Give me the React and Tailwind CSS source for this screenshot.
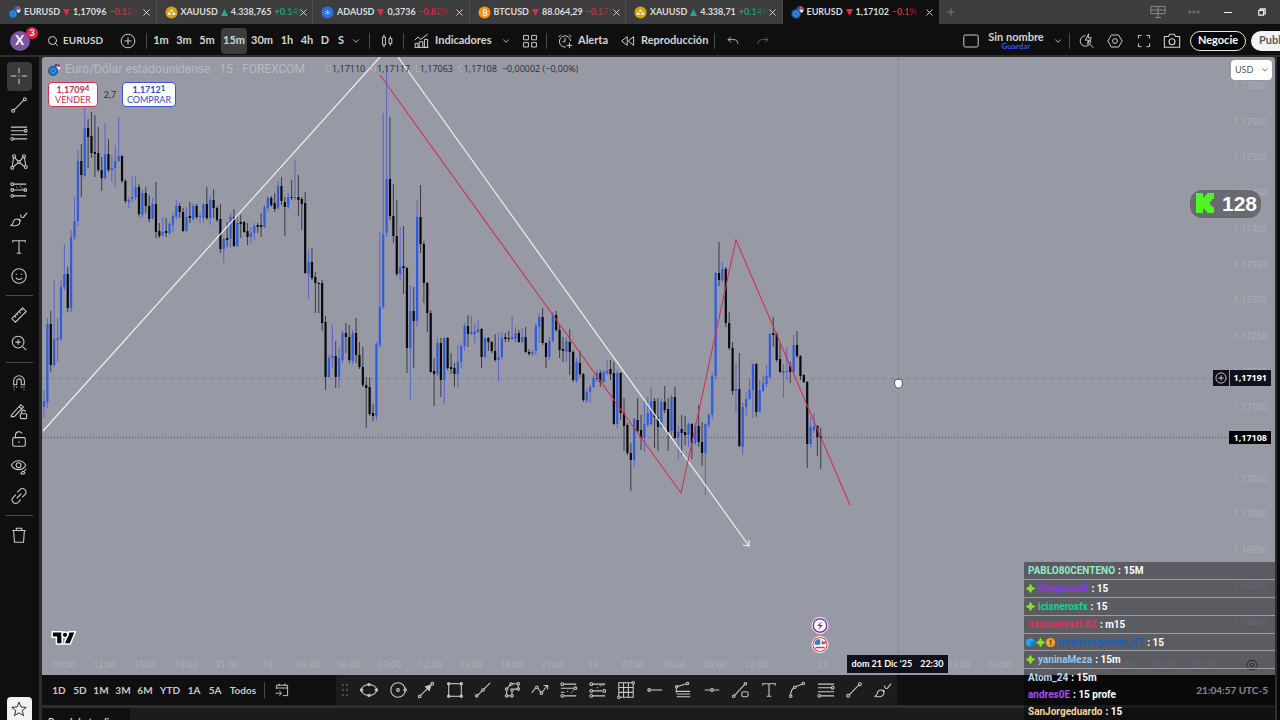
import React from "react";
import clsx from "clsx";
import { ChevronDown, Plus, Search, X } from "lucide-react";

const TABS = [
    { symbol: "EURUSD", price: "1,17096", change: "−0.12%", kind: "eur" },
    { symbol: "XAUUSD", price: "4.338,765", change: "+0.14%", kind: "gold", up: true },
    { symbol: "ADAUSD", price: "0,3736", change: "−0.82% /", kind: "ada" },
    { symbol: "BTCUSD", price: "88.064,29", change: "−0.17%", kind: "btc" },
    { symbol: "XAUUSD", price: "4.338,71", change: "+0.14%", kind: "gold", up: true },
    { symbol: "EURUSD", price: "1,17102", change: "−0.1% /", kind: "eur", active: true },
];

const INTERVALS = [
    ["1m", "w-6"],
    ["3m", "w-[22px]"],
    ["5m", "w-6"],
    ["15m", "w-[26px] mx-[2px] h-[26px] rounded bg-[#3d3d3d]"],
    ["30m", "w-[26px]"],
    ["1h", "w-6"],
    ["4h", "w-4"],
    ["D", "w-5"],
    ["S", "w-3"],
];

const RANGES = [
    ["1D", "w-[22px]"],
    ["5D", "w-5"],
    ["1M", "w-[22px]"],
    ["3M", "w-[22px]"],
    ["6M", "w-[22px]"],
    ["YTD", "w-7"],
    ["1A", "w-5"],
    ["5A", "w-[22px]"],
    ["Todos", "w-[34px]"],
];

const CHAT = [
    { user: "PABLO80CENTENO", text: "15M", color: "text-[#93ebc9]" },
    { user: "Diegossutil", text: "15", color: "text-[#9135e6]", badges: ["mod"] },
    { user: "icisnerosfx", text: "15", color: "text-[#19d193]", badges: ["mod"] },
    { user: "luisbuelvazLBX", text: "m15", color: "text-[#d8325c]" },
    { user: "freedarkgriever_XT", text: "15", color: "text-[#1f5fb8]", badges: ["cube", "mod", "coin"] },
    { user: "yaninaMeza", text: "15m", color: "text-[#93c4ee]", badges: ["mod"] },
    { user: "Atom_24", text: "15m", color: "text-[#bcdcf5]" },
    { user: "andres0E", text: "15 profe", color: "text-[#ab4cf5]" },
    { user: "SanJorgeduardo", text: "15", color: "text-[#f5d79a]" },
];

// one candle per entry: direction, high, body top, body bottom, low
const CANDLES = `
b 390 401 407 418;b 318 324 402 408;k 311 324 365 372;b 280 339 365 367;b 318 338 340 362;b 280 287 339 341
b 244 274 287 290;k 267 274 308 312;b 230 237 308 312;b 197 221 237 240;b 150 161 221 226;k 144 161 175 197
b 108 128 176 177;k 119 128 137 168;k 112 136 153 158;k 115 152 154 177;k 127 153 170 172;k 157 170 178 191
b 123 154 178 180;k 139 154 170 172;b 155 168 170 182;b 145 161 168 187;b 117 156 161 162;k 155 156 181 183
k 179 181 201 203;b 197 200 202 208;b 176 197 199 203;b 176 187 197 200;k 184 187 214 217;b 190 193 215 218
k 187 193 206 213;k 195 206 219 222;b 198 204 218 220;k 182 204 232 238;k 223 231 236 238;b 218 232 235 237
k 218 231 233 237;b 222 224 233 235;b 213 216 225 232;b 200 206 217 220;k 203 206 212 218;k 208 212 231 232
b 207 217 231 232;k 202 216 218 223;b 203 206 219 221;k 204 206 217 219;b 213 216 217 223;b 203 204 218 223
k 187 204 218 220;b 196 200 218 225;k 189 200 208 218;k 206 208 220 222;k 204 219 249 253;b 237 239 249 263
k 222 238 240 247;b 213 217 239 248;k 209 217 246 247;b 217 223 246 247;k 215 222 224 238;k 221 222 232 233
k 223 231 237 245;b 227 233 237 243;b 223 226 233 240;k 223 225 227 233;k 213 225 227 237;b 205 207 227 228
b 196 198 208 212;k 196 198 205 207;k 193 203 209 212;b 181 186 208 210;k 177 186 201 205;k 197 202 207 236
b 193 197 207 209;k 180 197 198 200;b 160 197 198 200;k 175 197 200 216;k 197 199 204 230;k 192 203 273 274
b 249 262 274 299;k 248 262 278 280;k 272 277 283 313;k 282 283 284 313;k 280 283 323 331;k 316 322 377 390
b 355 358 377 378;b 325 356 358 368;k 341 356 377 388;b 347 358 377 388;b 331 333 360 363;k 323 333 337 353
k 325 337 360 363;b 330 333 361 364;k 318 333 355 363;k 342 355 367 369;k 347 367 385 387;k 377 385 388 428
k 377 387 414 416;k 404 413 416 421;b 342 344 416 420;b 232 307 345 348;b 113 234 307 309;b 66 179 233 237
k 117 179 216 220;k 184 216 236 243;k 200 236 274 276;b 227 267 274 280;k 226 266 268 294;k 267 268 348 373
b 285 311 348 400;k 287 311 321 368;b 200 217 321 327;k 185 217 244 253;k 241 244 283 303;k 282 283 313 332
k 310 313 372 373;k 358 371 374 406;b 338 343 374 376;k 338 343 380 397;b 337 338 380 404;k 337 338 368 370
k 353 367 369 374;k 363 368 374 387;b 345 362 374 387;b 343 346 362 368;b 323 326 346 351;k 315 326 334 347
b 316 332 334 335;b 323 331 334 343;b 320 329 332 333;k 328 329 357 368;b 337 338 357 358;k 337 338 342 351
k 341 342 351 353;k 334 351 360 362;b 333 357 360 381;b 332 338 357 360;k 333 337 339 342;k 331 338 339 342
b 316 337 339 340;b 327 333 339 342;k 330 333 342 343;b 328 337 342 343;k 327 337 352 353;k 349 352 354 356
b 350 352 354 356;b 323 326 351 355;b 313 317 327 343;k 308 317 343 345;k 342 343 357 368;b 337 341 357 360
b 312 315 341 343;k 311 315 330 332;k 325 330 350 358;k 337 349 351 362;b 337 341 352 362;k 329 342 352 375
k 350 352 380 382;b 358 362 381 383;k 351 363 374 377;k 373 374 400 402;b 388 392 401 403;b 385 387 392 403
b 375 378 387 388;b 370 373 380 382;k 370 373 382 387;b 370 372 382 383;b 360 371 373 375;k 360 369 374 380
k 362 373 424 425;b 370 373 424 428;k 372 373 413 420;k 398 413 426 451;k 423 425 453 455;k 443 453 460 491
b 418 419 460 467;k 398 420 431 432;k 415 430 438 450;b 400 424 438 452;b 397 413 425 427;b 387 401 424 426
k 398 401 417 448;k 398 417 427 451;b 398 402 427 428;k 386 402 410 413;k 398 409 432 451;b 395 397 431 435
k 387 397 438 439;b 425 432 438 459;k 415 429 433 455;k 416 432 435 445;b 422 424 435 447;k 423 424 443 459
b 423 426 443 445;k 405 426 442 447;k 422 442 453 466;b 423 424 453 495;b 413 415 425 428;b 373 376 415 419
b 272 273 376 379;k 242 273 280 286;b 262 269 280 282;k 267 269 323 327;k 312 323 348 350;k 342 348 391 395
b 363 389 391 413;k 353 389 446 447;b 403 407 447 455;b 392 399 407 416;b 379 390 399 400;b 363 364 390 418
k 363 364 412 417;b 380 390 412 413;b 375 383 391 392;b 365 376 384 387;b 333 334 377 379;k 317 333 335 347
k 332 334 360 362;k 343 359 372 373;b 364 371 373 398;b 347 371 372 380;k 362 366 372 383;b 335 345 372 373
k 331 345 356 358;k 355 356 376 380;k 374 375 382 383;k 381 382 444 468;b 417 427 444 447;b 413 426 430 433
k 425 426 437 456;k 428 436 438 469`
    .trim()
    .split(/[;\n]/)
    .map((line) => {
        const [dir, ...v] = line.split(" ");
        const [high, top, bottom, low] = v.map(Number);
        return { dir, high, top, bottom, low };
    });

const TIMES = [
    "09:00", "12:00", "15:00", "18:00", "21:00", "18", "03:00", "06:00", "09:00", "12:00", "15:00", "18:00",
    "21:00", "19", "03:00", "06:00", "09:00", "12:00",
].map((label, i) => ({ label, x: 22 + i * 40.7 }));
const LATE_TIMES = [
    { label: "21", x: 781 },
    { label: "03:00", x: 917 },
    { label: "06:00", x: 958 },
    { label: "09:00", x: 999 },
    { label: "12:00", x: 1039 },
    { label: "15:00", x: 1080 },
    { label: "18:00", x: 1121 },
    { label: "21:00", x: 1161 },
];

// the last price tag sits over 1,17100
const PRICES = [
    "1,17600", "1,17550", "1,17500", "1,17450", "1,17400", "1,17350", "1,17300", "1,17250", "1,17200", "1,17150",
    null, "1,17050", "1,17000", "1,16950", "1,16900", "1,16850",
];

/* ---------- icons ---------- */

const ICONS = {
    cross: <path d="M10 1v6M10 13v6M1 10h6M13 10h6M10 9.5v1" />,
    trend: <><path d="M4.4 15.6 15.6 4.4" /><circle cx="3.5" cy="16.5" r="1.6" /><circle cx="16.5" cy="3.5" r="1.6" /></>,
    fib: <><path d="M1 3.5h18M1 7.5h15M1 12h18M4 16.5h15" /><circle cx="17.5" cy="7.5" r="1.5" /><circle cx="2.5" cy="16.5" r="1.5" /></>,
    pattern: <><path d="M4 5 2.5 15M5 5l4 4M11 9l4-5M16 5l1.5 9M4 15l5-4M11 11l5 4" /><circle cx="4.5" cy="3.5" r="1.6" /><circle cx="15.5" cy="3.5" r="1.6" /><circle cx="10" cy="10" r="1.5" /><circle cx="2.5" cy="16.5" r="1.6" /><circle cx="17.5" cy="15.5" r="1.6" /></>,
    forecast: <><path d="M4 3.5h14M4 10h12M4 16.5h14M7 7h1M11 6h1M13 8h1" /><circle cx="2.5" cy="3.5" r="1.5" /><circle cx="2.5" cy="10" r="1.5" /><circle cx="17" cy="10" r="1.5" /><circle cx="2.5" cy="16.5" r="1.5" /></>,
    forecastUp: <><path d="M4 3.5h14M4 11h11M4 16.5h14M9 8l1-1M12 6l1-1M15 5l1-1" /><circle cx="2.5" cy="3.5" r="1.5" /><circle cx="2.5" cy="11" r="1.5" /><circle cx="17" cy="11" r="1.5" /><circle cx="2.5" cy="16.5" r="1.5" /></>,
    projection: <><path d="M4 3.5h14M1 8h14.500M1 12.500h4M4 16.5h14M8 11.5h1M12 13h1M14 11h1" /><circle cx="2.5" cy="3.5" r="1.5" /><circle cx="17" cy="8" r="1.5" /><circle cx="2.5" cy="16.5" r="1.5" /></>,
    brush: <path d="M1 17c3-1 2-4 4-6 2-2 6-1 6 2s-3 5-6 4.5c-1.5-.2-3 .2-4-.5zM10 10l2 2M12 5c-.5 3 1 4 3 3l4-5" />,
    text: <path d="M3 5V3h14v2M10 3v14M7.5 17h5" />,
    smile: <><circle cx="10" cy="10" r="8" /><path d="M7 7.500v1.500M13 7.500v1.500M6.5 12c1.5 2.6 5.500 2.6 7 0" /></>,
    ruler: <path d="M2 14 14 2l4 4L6 18zM5 11l2 2M7.5 8.5 9 10M10 6l2 2M12.5 3.5 14 5" />,
    zoom: <><circle cx="9" cy="9" r="6.5" /><path d="m14 14 4 4M9 6v6M6 9h6" /></>,
    magnet: <path d="M4 13V9a6 6 0 0 1 12 0v4h-3.500V9a2.500 2.500 0 0 0-5 0v4zM4.500 15v1.500M4.500 18v1M15.500 15v1.500M15.500 18v1M7.500 15v1.500M12.500 15v1.500" />,
    pencilLock: <><path d="M1.5 14.5 12 3l3 2.5L5 16l-3.500.5zM10 5l3 2.5" /><rect x="11.5" y="13" width="7" height="5.500" rx="1" /><path d="M13 13v-2a2 2 0 0 1 4 0" /></>,
    unlock: <><rect x="3" y="8.5" width="14" height="9.5" rx="1.5" /><path d="M6 8.500V6a4 4 0 0 1 7.500-2M10 12.500v2" /></>,
    eye: <><path d="M1.500 8C5 1.500 14 1.500 17.500 8 14 14.500 5 14.500 1.500 8z" /><circle cx="9.5" cy="8" r="2.700" /><path d="M12 17.500c1-3 3-3 4-2s0 3-4 2zM16 14l2-1.500" /></>,
    link: <path d="m8 6 3-3a3.800 3.800 0 0 1 5.500 5.500l-3 3M12 14l-3 3a3.800 3.800 0 0 1-5.500-5.500l3-3M7.500 12.500l5-5" />,
    trash: <path d="M2.500 5h15M7 5V2.500h6V5M4 5l1 13h10l1-13" />,
    star: <path d="m10 1.500 2.500 6 6.500.4-5 4.100 1.700 6.300L10 14.800l-5.700 3.500L6 12 1 7.900l6.500-.4z" />,
    ellipse: <><ellipse cx="10" cy="10" rx="8.500" ry="6" /><circle cx="10" cy="4" r="1.300" /><circle cx="10" cy="16" r="1.300" /><circle cx="1.800" cy="10" r="1.300" /><circle cx="18.200" cy="10" r="1.300" /></>,
    circle: <><circle cx="10" cy="10" r="8" /><circle cx="10" cy="10" r="1.500" /><circle cx="18" cy="10" r="1.400" /></>,
    arrow: <><path d="m4 16 9-9" /><path d="m15.500 4.500-6 2 4 4z" fill="currentColor" /><circle cx="3" cy="17" r="1.500" /><circle cx="17" cy="3" r="1.500" /></>,
    rect: <><rect x="3" y="3" width="14" height="14" /><circle cx="3" cy="3" r="1.300" /><circle cx="17" cy="3" r="1.300" /><circle cx="3" cy="17" r="1.300" /><circle cx="17" cy="17" r="1.300" /></>,
    ray: <><path d="m4 16 5-5M11 9l7-7" /><circle cx="3" cy="16.500" r="1.400" /><circle cx="10" cy="10" r="1.400" /></>,
    path: <><path d="M5 8l3-4M10.500 3H16M17 4.500v3M16 9h-4.500M10 11.500v3.500M8.500 16.500h-3M4 15v-4.500" /><circle cx="4" cy="9" r="1.400" /><circle cx="9" cy="3.500" r="1.400" /><circle cx="17" cy="3" r="1.400" /><circle cx="17" cy="9" r="1.400" /><circle cx="10" cy="10" r="1.400" /><circle cx="4" cy="16.500" r="1.400" /><circle cx="10" cy="16.500" r="1.400" /></>,
    zigzag: <><path d="m1 13 4-5M7.500 8l3.500 4.500M12.500 12.500 18 5M14 5h4.500v4.500" /><circle cx="6.500" cy="7" r="1.400" /><circle cx="11.500" cy="13.500" r="1.400" /></>,
    grid: <><path d="M2 2h16v16H2zM2 7.300h16M2 12.600h16M7.300 2v16M12.600 2v16" /><circle cx="2" cy="18" r="1.400" fill="#1c1c1c" /><circle cx="18" cy="2" r="1.400" fill="#1c1c1c" /></>,
    hray: <><path d="M5 10h13" /><circle cx="3.500" cy="10" r="1.500" /></>,
    speed: <><path d="m4 6 10-3M2.500 8v5M3 11.500h15M3 14.500h15M3 17.500h15" /><circle cx="3" cy="6.500" r="1.400" /><circle cx="15" cy="2.800" r="1.400" /></>,
    hline: <><path d="M2 10h6.500M11.500 10H18" /><circle cx="10" cy="10" r="1.500" /></>,
    trendShape: <><path d="m4 16 11-12" /><circle cx="3" cy="17" r="1.400" /><circle cx="16" cy="3" r="1.400" /><rect x="12" y="12" width="7" height="5.500" rx="2" /></>,
    curve: <><path d="M3 15.500c0-3 1-6 3.500-8M9 6l6.500-2.500" /><circle cx="3" cy="17" r="1.400" /><circle cx="7.500" cy="7" r="1.400" /><circle cx="17" cy="2.800" r="1.400" /></>,
    candles: <path d="M4.500 5h3.500v10H4.500zM6.200 2v3M6.200 15v3M12.500 7H16v6h-3.500zM14.200 4v3M14.200 13v3" />,
    indicators: <path d="M1 9l4-4 3.500 3L17 1.500M1.500 18v-5H5v5M6.500 18v-7H11v7M13 18V8h4v10zM1 18h17" />,
    layout: <path d="M2 3h6v5.500H2zM12 3h6v5.500h-6zM2 12h6v5.500H2zM12 12h6v5.500h-6z" />,
    alert: <path d="M11 17.500A7 7 0 1 1 17 10M10 6v5H7M2 5l3-3M15 2l3 3M15.500 12v7M12 15.500h7" />,
    replay: <path d="M9 4.500v11L2 10zM17 4.500v11L10.500 10z" />,
    undo: <path d="M7 4 3 8l4 4M3 8h8c4 0 6 2 6 6" />,
    redo: <path d="m13 4 4 4-4 4M17 8H9c-4 0-6 2-6 6" />,
    quick: <><path d="M14.500 9.500A6.500 6.500 0 1 1 8 3.500M13.500 14l4.500 4.500" /><path d="m12 1-4 8h4l-1.500 5L15.500 6h-4z" /></>,
    settings: <><path d="m5.500 2.500h9l4.500 7.500-4.500 7.500h-9L1 10z" /><circle cx="10" cy="10" r="3" /></>,
    full: <path d="M3 7V3h4M13 3h4v4M17 13v4h-4M7 17H3v-4" />,
    camera: <><path d="M1.500 5H6l1.500-2.500h5L14 5h4.500v12h-17z" /><circle cx="10" cy="10.800" r="3.300" /></>,
    calendar: <path d="M3 9V4h14v13h-6M3 7.500h14M6.500 2v3M13.500 2v3M2 14h7M6.500 11 9.500 14l-3 3" />,
    plusCircle: <><circle cx="10" cy="10" r="8.500" /><path d="M10 5.500v9M5.500 10h9" /></>,
    monitor: <path d="M1 3h18v9H1zM1 7.500h18M10 3v14M6 17h8" />,
    dots: <><circle cx="3" cy="10" r="2" /><circle cx="10" cy="10" r="2" /><circle cx="17" cy="10" r="2" /></>,
    frame: <rect x="1" y="2.500" width="18" height="15" rx="2" />,
};

function Icon({ name, className = "size-5" }) {
    return (
        <svg viewBox="0 0 20 20" className={clsx("shrink-0", className)} fill="none" stroke="currentColor" strokeWidth="1.2" aria-hidden="true">
            {ICONS[name]}
        </svg>
    );
}

function CoinIcon({ kind }) {
    if (kind === "eur") {
        return (
            <svg viewBox="0 0 14 14" className="size-[13px] shrink-0" aria-hidden="true">
                <circle cx="10" cy="4" r="3.500" fill="#f3e9ee" />
                <path d="M10 .5a3.500 3.500 0 0 1 3.500 3.500H10z" fill="#d9304c" />
                <path d="M6.500 4A3.500 3.500 0 0 1 10 .5V4z" fill="#2a4fa8" />
                <circle cx="5.500" cy="8.500" r="5" fill="#1f6fc4" stroke="#0f3558" strokeWidth="0.600" />
                <circle cx="5.500" cy="8.500" r="2.400" fill="none" stroke="#8fc3ee" strokeDasharray="1 1" />
            </svg>
        );
    }
    const fill = { gold: "#d4a117", ada: "#2f6fd6", btc: "#f7931a" }[kind];
    return (
        <svg viewBox="0 0 14 14" className="size-[13px] shrink-0" aria-hidden="true">
            <circle cx="7" cy="7" r="6.500" fill={fill} />
            {kind === "gold" && <path d="m5.500 6 .7-2h1.600l.7 2zM2.800 9.500l.8-2.500h2l.8 2.500zM7.600 9.500 8.400 7h2l.8 2.500z" fill="#fff" />}
            {kind === "ada" && <><circle cx="7" cy="7" r="2" fill="none" stroke="#fff" strokeDasharray="1 1" /><circle cx="7" cy="7" r="0.800" fill="#fff" /></>}
            {kind === "btc" && <path d="M5.500 4h2.200a1.400 1.400 0 0 1 0 3H5.800h2.200a1.500 1.500 0 0 1 0 3H5.200M5.800 4v6M6.800 3v1M6.800 10v1" fill="none" stroke="#fff" strokeWidth="1.100" />}
        </svg>
    );
}

function ChatBadge({ type }) {
    return (
        <svg viewBox="0 0 10 10" className="size-[9px] shrink-0" aria-hidden="true">
            {type === "mod" && <path d="m5 .5 1.500 3 3 1.500-3 1.500-1.500 3-1.500-3-3-1.500 3-1.500z" fill="#8be01e" stroke="#8be01e" strokeWidth="1.200" strokeLinejoin="round" />}
            {type === "cube" && <><path d="m5 0 5 2.500v5L5 10 0 7.500v-5z" fill="#22a7e8" /><path d="M5 5v5l5-2.500v-5z" fill="#0f7fc0" /></>}
            {type === "coin" && <><circle cx="5" cy="5" r="5" fill="#f5a623" /><path d="M4 3.500 5.300 2.500V8" fill="none" stroke="#6b3d00" strokeWidth="1.300" /></>}
        </svg>
    );
}

/* ---------- page parts ---------- */

function Sep() {
    return <span className="h-4 w-px shrink-0 bg-[#4a4a4a]" />;
}

function ToolButton({ icon, label, className, iconClass }) {
    return (
        <button type="button" aria-label={label || icon} className={clsx("flex shrink-0 items-center justify-center", className)}>
            <Icon name={icon} className={iconClass} />
        </button>
    );
}

function TabBar() {
    return (
        <header className="flex h-6 shrink-0 items-stretch bg-[#3d3d3d] text-[#dcdcdc]">
            <div className="grid w-[939px] shrink-0 grid-cols-6">
                {TABS.map((tab, i) => (
                    <div
                        key={i}
                        className={clsx("flex min-w-0 items-center border-r pl-2 pr-[3px]", tab.active ? "border-[#0f0f0f] bg-[#0f0f0f]" : "border-[#4f4f4f]")}
                    >
                        <button type="button" className="flex min-w-0 flex-1 items-center gap-[3px] whitespace-nowrap text-[9px]">
                            <CoinIcon kind={tab.kind} />
                            <span className="font-bold">{tab.symbol}</span>
                            <svg viewBox="0 0 8 8" className={clsx("size-[7px] shrink-0", tab.up ? "text-[#22ab94]" : "text-[#e0294a]")} aria-hidden="true">
                                <path d={tab.up ? "M4 0l4 8H0z" : "M0 0h8L4 8z"} fill="currentColor" />
                            </svg>
                            <span className="font-bold">{tab.price}</span>
                            <span className={clsx("font-bold [mask-image:linear-gradient(to_right,black_40%,transparent)]", tab.up ? "text-[#22a57f]" : "text-[#e0294a]")}>{tab.change}</span>
                        </button>
                        <button type="button" aria-label="Cerrar" className="flex w-3 shrink-0 justify-center">
                            <X className="size-[11px]" />
                        </button>
                    </div>
                ))}
            </div>
            <button type="button" aria-label="Nueva pestaña" className="flex w-6 items-center justify-center text-[#8a8a8a]">
                <Plus className="size-3" strokeWidth={1.5} />
            </button>
            <div className="ml-auto flex items-center text-[#8c8c8c]">
                <ToolButton icon="monitor" className="w-9" iconClass="size-4" />
                <ToolButton icon="dots" className="w-9" iconClass="size-3" />
                <button type="button" aria-label="Minimizar" className="flex w-8 justify-center text-[#f0f0f0]">
                    <span className="h-px w-2 bg-current" />
                </button>
                <button type="button" aria-label="Restaurar" className="flex w-9 justify-center text-[#f0f0f0]">
                    <svg viewBox="0 0 10 10" className="size-2" fill="none" stroke="currentColor" strokeWidth="1.500">
                        <path d="M1 3h6v6H1zM3 3V1h6v6H7" />
                    </svg>
                </button>
            </div>
        </header>
    );
}

function Toolbar() {
    return (
        <div className="flex h-[31px] shrink-0 items-center overflow-hidden bg-[#0f0f0f] pt-[2px] text-[11px] font-bold text-[#d4d4d4]">
            <button type="button" className="relative flex h-full w-[39px] shrink-0 items-center justify-center" aria-label="Perfil">
                <span className="flex size-5 items-center justify-center rounded-full bg-[#7a55a5] text-[13px] text-white">X</span>
                <span className="absolute right-[1px] top-[1px] flex size-3 items-center justify-center rounded-full bg-[#e01e46] text-[9px] text-white">3</span>
            </button>
            <button type="button" className="flex w-[71px] shrink-0 items-center gap-1 pl-2">
                <Search className="size-3 shrink-0" />
                <span className="text-[10px]">EURUSD</span>
            </button>
            <ToolButton icon="plusCircle" label="Comparar" className="w-9" iconClass="size-4" />
            <Sep />
            <div className="ml-[2px] flex shrink-0 items-center">
                {INTERVALS.map(([label, width]) => (
                    <button key={label} type="button" className={clsx("text-center", width)}>{label}</button>
                ))}
                <button type="button" aria-label="Intervalos" className="flex w-[18px] justify-center">
                    <ChevronDown className="size-[10px]" />
                </button>
            </div>
            <span className="w-1 shrink-0" />
            <Sep />
            <ToolButton icon="candles" className="w-[33px]" iconClass="size-4" />
            <Sep />
            <button type="button" className="flex w-[92px] shrink-0 items-center gap-[5px] pl-[10px]">
                <Icon name="indicators" className="size-4" />
                <span>Indicadores</span>
            </button>
            <button type="button" aria-label="Favoritos" className="flex w-5 shrink-0 justify-center">
                <ChevronDown className="size-[10px]" />
            </button>
            <ToolButton icon="layout" className="w-[28px]" iconClass="size-4" />
            <span className="w-[2px] shrink-0" />
            <Sep />
            <button type="button" className="flex w-[63px] shrink-0 items-center gap-[5px] pl-[10px]">
                <Icon name="alert" className="size-4" />
                <span>Alerta</span>
            </button>
            <button type="button" className="flex w-[104px] shrink-0 items-center gap-[5px] pl-[10px]">
                <Icon name="replay" className="size-4" />
                <span>Reproducción</span>
            </button>
            <Sep />
            <ToolButton icon="undo" className="w-9" iconClass="size-[14px]" />
            <ToolButton icon="redo" className="w-6 text-[#6a6a6a]" iconClass="size-[14px]" />

            <div className="-mr-6 ml-auto flex shrink-0 items-center">
                <ToolButton icon="frame" label="Diseño" className="w-4" iconClass="size-4" />
                <button type="button" className="flex w-[74px] flex-col items-center leading-[10px]">
                    <span>Sin nombre</span>
                    <span className="text-[8px] leading-[8px] text-[#2f57f5]">Guardar</span>
                </button>
                <ChevronDown className="mr-[6px] size-[10px]" />
                <Sep />
                <ToolButton icon="quick" className="ml-[2px] w-[29px]" iconClass="size-4" />
                <ToolButton icon="settings" className="w-7" iconClass="size-4" />
                <ToolButton icon="full" className="w-[29px]" iconClass="size-4" />
                <ToolButton icon="camera" className="w-7" iconClass="size-[18px]" />
                <button type="button" className="ml-1 h-5 w-14 rounded-full border border-[#e8e8e8] bg-black text-center text-white">Negocie</button>
                <button type="button" className="ml-[5px] h-5 w-[53px] rounded-full bg-[#f2f2f2] pl-2 text-left text-[#5a5a5a]">Publicar</button>
            </div>
        </div>
    );
}

function SideGroup({ icons, className }) {
    return (
        <div className={clsx("flex shrink-0 flex-col items-center", className)}>
            {icons.map((name) => (
                <ToolButton key={name} icon={name} className={clsx("w-[25px] flex-1", name === "cross" && "rounded bg-[#3a3a3a]")} iconClass="size-[18px]" />
            ))}
        </div>
    );
}

function Sidebar() {
    return (
        <aside className="flex w-[39px] shrink-0 flex-col items-center gap-[5px] bg-[#0f0f0f] pr-px pt-[5px] text-[#c8c8c8]">
            <SideGroup className="h-[228px]" icons={["cross", "trend", "fib", "pattern", "forecast", "brush", "text", "smile"]} />
            <span className="h-px w-[27px] shrink-0 bg-[#4a4a4a]" />
            <SideGroup className="h-[56px]" icons={["ruler", "zoom"]} />
            <span className="h-px w-[27px] shrink-0 bg-[#4a4a4a]" />
            <SideGroup className="h-[142px]" icons={["magnet", "pencilLock", "unlock", "eye", "link"]} />
            <span className="h-px w-[27px] shrink-0 bg-[#4a4a4a]" />
            <SideGroup className="h-7" icons={["trash"]} />
            <button type="button" aria-label="Favoritos" className="mt-auto flex h-[23px] w-[25px] shrink-0 items-center justify-center rounded-t bg-[#f2f2f2] text-[#222]">
                <Icon name="star" className="size-4" />
            </button>
        </aside>
    );
}

function ChartDrawing() {
    return (
        <svg className="absolute inset-0 size-full" aria-hidden="true">
            <g fontSize="9" fill="#adb0b9" fontFamily="Open Sans, sans-serif">
                {[...TIMES, ...LATE_TIMES].map((t, i) => (
                    <text key={i} x={t.x} y="611" textAnchor="middle">{t.label}</text>
                ))}
                {PRICES.map((p, i) => p && (
                    <text key={p} x="100%" dx="-8" y={32 + i * 35.7} textAnchor="end">{p}</text>
                ))}
            </g>
            <path d="M0 321.500H1188" stroke="#82858f" strokeDasharray="4 4" />
            <path d="M856.500 0V618" stroke="#82858f" strokeDasharray="4 4" />
            <path d="M0 380.500H1188" stroke="#55575e" strokeDasharray="1 2" />
            <g transform="translate(-42 -57)">
                {CANDLES.map((c, i) => {
                    const x = 44 + i * 3.392;
                    const blue = c.dir === "b";
                    return (
                        <g key={i}>
                            <rect x={x - 0.5} y={c.high} width="1" height={c.low - c.high} fill={blue ? "#5a62cc" : "#3b3c42"} />
                            <rect x={x - 1.1} y={c.top} width="2.200" height={c.bottom - c.top} fill={blue ? "#2f5bdc" : "#08090e"} />
                        </g>
                    );
                })}
                <path d="M43 431 380 57M398 57l351 489" fill="none" stroke="#eeeff3" strokeWidth="1.200" />
                <path d="m743 545 6 1v-6" fill="none" stroke="#eeeff3" strokeWidth="1.200" />
                <path d="m380 75 301 418 55-253 114 265" fill="none" stroke="#cf3350" strokeWidth="1.100" />
                <circle cx="820" cy="625.500" r="8" fill="#8b2fa8" stroke="#fff" />
                <circle cx="820" cy="625.500" r="6" fill="#fff" />
                <path d="m822 621-5 5h3l-2 4 5-5h-3z" fill="#8b2fa8" />
                <circle cx="820" cy="644.500" r="8" fill="#dc3545" stroke="#fff" />
                <circle cx="820" cy="644.500" r="6.500" fill="#fff" />
                <path d="M814.500 645v-3.500l3-2.500h3v6zM821.500 639.500v5h4M816 648.500h8" fill="#2c7fc4" stroke="#fff" strokeWidth="0.500" />
                <path d="M815.500 647.500h9M822 642.500h4" stroke="#dc3545" strokeWidth="1.500" />
                <path d="M894.500 382c0-3 7-4 7.500-1 1 4 0 7-3.500 7-3 0-4-3-4-6z" fill="#fff" stroke="#333" strokeWidth="0.800" />
            </g>
            <g transform="translate(11 573) scale(0.6)" fill="#050505" stroke="#fff" strokeWidth="5" paintOrder="stroke">
                <path d="M14 22H7V11H0V4h14z" />
                <path d="M28 22h-8l7.500-18h8z" />
                <circle cx="20" cy="8" r="3.500" />
            </g>
        </svg>
    );
}

function Ohlc({ label, value }) {
    return (
        <span>
            <span className="text-[#b0b3bc]">{label}</span>
            {value}
        </span>
    );
}

function Chart() {
    return (
        <section className="relative min-h-0 flex-1 overflow-hidden rounded-t-[3px] bg-[#979aa4]">
            <ChartDrawing />
            <div className="relative flex flex-col gap-[6px] pl-[6px] pt-[5px]">
                <div className="flex h-[14px] items-center whitespace-nowrap text-[12px]">
                    <CoinIcon kind="eur" />
                    <h1 className="ml-1 w-[260px] font-['Roboto',sans-serif] text-[#b6b9c2]">Euro/Dólar estadounidense · 15 · FOREXCOM</h1>
                    <p className="flex gap-[5px] font-['Open_Sans',sans-serif] text-[9px] text-[#2a2d3d]">
                        <Ohlc label="O" value="1,17110" />
                        <Ohlc label="H" value="1,17117" />
                        <Ohlc label="L" value="1,17063" />
                        <Ohlc label="C" value="1,17108" />
                        <span>−0,00002 (−0,00%)</span>
                    </p>
                </div>
                <div className="flex items-center text-center text-[9px] leading-[10px]">
                    <button type="button" className="h-[25px] w-[50px] rounded border border-[#cf3350] bg-white text-[#c22f4d]">
                        <span className="block font-bold">1,1709<sup className="top-[-2px] text-[8px] leading-none">4</sup></span>
                        <span className="block">VENDER</span>
                    </button>
                    <span className="w-6 text-[9px] text-[#2a2d3d]">2,7</span>
                    <button type="button" className="h-[25px] w-[54px] rounded border border-[#3a50e0] bg-white text-[#3547cc]">
                        <span className="block font-bold">1,1712<sup className="top-[-2px] text-[8px] leading-none">1</sup></span>
                        <span className="block">COMPRAR</span>
                    </button>
                </div>
            </div>
            <div className="absolute right-[3px] top-[3px] flex">
                <select aria-label="Divisa" className="h-5 w-[41px] appearance-none rounded bg-white pl-1 text-[9px] text-[#5a5a5a]">
                    <option>USD</option>
                </select>
                <ChevronDown className="pointer-events-none absolute right-[3px] top-[6px] size-2 text-[#333]" />
            </div>
            <div className="absolute right-[14px] top-[133px] flex h-7 items-center gap-2 rounded-xl bg-[#696a6f] pb-[2px] pl-[6px] pr-1">
                <svg viewBox="0 0 18 20" className="h-5 w-[18px]" aria-hidden="true">
                    <path d="M0 0h7v4h2V2h2V0h7v6h-2v2h-2v4h2v2h2v6h-7v-2H9v-2H7v4H0z" fill="#4ff51e" />
                </svg>
                <span className="font-['Liberation_Sans',sans-serif] text-[21px] font-bold leading-none text-white">128</span>
            </div>
            <div className="absolute right-1 top-[313px] flex h-4 gap-px font-['Open_Sans',sans-serif] text-[9px] font-bold leading-4 text-white">
                <button type="button" aria-label="Añadir alerta" className="flex w-4 items-center justify-center bg-[#10111c]">
                    <Icon name="plusCircle" className="size-3" />
                </button>
                <span className="w-[41px] bg-[#10111c] pr-1 text-right">1,17191</span>
            </div>
            <span className="absolute right-1 top-[374px] h-[13px] w-[42px] bg-black pr-1 text-right font-['Open_Sans',sans-serif] text-[9px] font-bold leading-[13px] text-white">1,17108</span>
            <span className="absolute left-[805px] top-[598px] flex h-[18px] w-[101px] items-center justify-center gap-2 whitespace-nowrap bg-[#10111c] text-[9px] font-bold text-white">
                <span>dom 21 Dic '25</span>
                <span>22:30</span>
            </span>
            <button type="button" aria-label="Ajustes de escala" className="absolute bottom-1 right-[17px] text-[#2c2d33]">
                <Icon name="settings" className="size-3" />
            </button>
        </section>
    );
}

const DRAW_TOOLS = [
    "ellipse", "circle", "arrow", "rect", "ray", "path", "zigzag", "projection", "forecastUp", "grid", "hray",
    "speed", "hline", "trendShape", "text", "curve", "fib", "trend", "brush",
];

function RangeBar() {
    return (
        <div className="flex h-[30px] shrink-0 items-stretch bg-[#0f0f0f] text-[10px] font-bold text-[#c8c8c8]">
            <div className="flex w-[294px] shrink-0 items-center pl-[6px]">
                {RANGES.map(([label, width]) => (
                    <button key={label} type="button" className={clsx("shrink-0 text-center", width)}>{label}</button>
                ))}
                <span className="w-1 shrink-0" />
                <Sep />
                <ToolButton icon="calendar" className="w-[34px]" iconClass="size-4" />
            </div>
            <div className="flex w-[561px] shrink-0 items-center rounded-t bg-[#1c1c1c]">
                <svg viewBox="0 0 6 12" className="ml-[6px] mr-[7px] h-3 w-[6px] shrink-0" fill="#4a4a4a" aria-hidden="true">
                    <path d="M0 0h2v2H0zM4 0h2v2H4zM0 5h2v2H0zM4 5h2v2H4zM0 10h2v2H0zM4 10h2v2H4z" />
                </svg>
                {DRAW_TOOLS.map((name) => (
                    <ToolButton key={name} icon={name} className="min-w-0 flex-1" iconClass="size-[18px]" />
                ))}
            </div>
            <span className="ml-auto self-center whitespace-nowrap pr-[7px] text-[#e0e0e0]">21:04:57 UTC-5</span>
        </div>
    );
}

function Chat() {
    return (
        <div className="absolute bottom-0 right-[5px] flex h-[158px] w-[251px] flex-col bg-black/40 font-['Roboto',sans-serif] text-[10px] font-bold text-white">
            {CHAT.map((msg, i) => (
                <p key={msg.user} className={clsx("flex flex-1 items-center gap-[3px] whitespace-nowrap", i < 6 && "border-b border-[#9c9da3]", msg.badges ? "pl-[2px]" : "pl-1")}>
                    {msg.badges && (
                        <span className="flex gap-px">
                            {msg.badges.map((b) => <ChatBadge key={b} type={b} />)}
                        </span>
                    )}
                    <span className={msg.color}>{msg.user}</span>
                    <span>: {msg.text}</span>
                </p>
            ))}
        </div>
    );
}

export default function App() {
    return (
        <div className="relative flex h-screen w-full flex-col overflow-hidden bg-[#2e2e2e] font-['Lato','Open_Sans',sans-serif]">
            <TabBar />
            <Toolbar />
            <main className="mt-[2px] flex min-h-0 flex-1">
                <Sidebar />
                <div className="ml-[3px] flex min-w-0 flex-1 flex-col">
                    <Chart />
                    <RangeBar />
                    <footer className="mt-[3px] flex h-3 shrink-0 overflow-hidden bg-[#1c1c1c]">
                        <button type="button" className="h-6 w-[88px] whitespace-nowrap bg-[#0f0f0f] pl-[6px] pt-[3px] text-left text-[10px] font-bold text-[#d4d4d4]">
                            Panel de trading
                        </button>
                    </footer>
                </div>
                <div className="ml-[2px] w-[3px] shrink-0 bg-[#0a0a0a]" />
            </main>
            <Chat />
        </div>
    );
}
